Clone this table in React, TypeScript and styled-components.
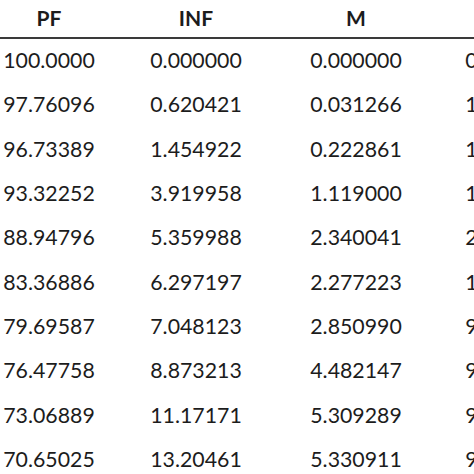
import React from 'react';
import styled, {createGlobalStyle} from 'styled-components';

const Global = createGlobalStyle`
  html, body {
    margin: 0;
    padding: 0;
    background: #fff;
  }
`

const Page = styled.div`
  width: 474px;
  height: 474px;
  overflow: hidden;
  background: #fff;
  font-family: Lato, "Noto Sans", sans-serif;
  color: #1c1c1c;
`

const Table = styled.div`
  display: grid;
  grid-template-columns: 98px 196px 124px 186px;
  width: 604px;
`

const Head = styled.div`
  height: 39px;
  box-sizing: border-box;
  border-bottom: 2px solid #3a3a3a;
  padding-bottom: 3px;
  display: flex;
  align-items: center;
  justify-content: center;
  font-size: 21px;
  font-weight: 700;
`

const Cell = styled.div`
  height: 44.3px;
  padding-bottom: 2px;
  box-sizing: border-box;
  display: flex;
  align-items: center;
  justify-content: center;
  font-size: 21.3px;
  font-weight: 400;
`

// the last column runs past the right edge, its header is off-screen
const headers = ['PF', 'INF', 'M', ''];

const rows = [
    ['100.0000', '0.000000', '0.000000', '0.000000'],
    ['97.76096', '0.620421', '0.031266', '1.587353'],
    ['96.73389', '1.454922', '0.222861', '1.588327'],
    ['93.32252', '3.919958', '1.119000', '1.638522'],
    ['88.94796', '5.359988', '2.340041', '2.352011'],
    ['83.36886', '6.297197', '2.277223', '1.056716'],
    ['79.69587', '7.048123', '2.850990', '9.405017'],
    ['76.47758', '8.873213', '4.482147', '9.867060'],
    ['73.06889', '11.17171', '5.309289', '9.450111'],
    ['70.65025', '13.20461', '5.330911', '9.814379'],
];

const App = () => {
    return (
        <Page>
            <Global/>
            <Table>
                {headers.map((h, i) => <Head key={i}>{h}</Head>)}
                {rows.map((r, i) => r.map((v, j) => <Cell key={i + '-' + j}>{v}</Cell>))}
            </Table>
        </Page>
    );
};

export default App;
